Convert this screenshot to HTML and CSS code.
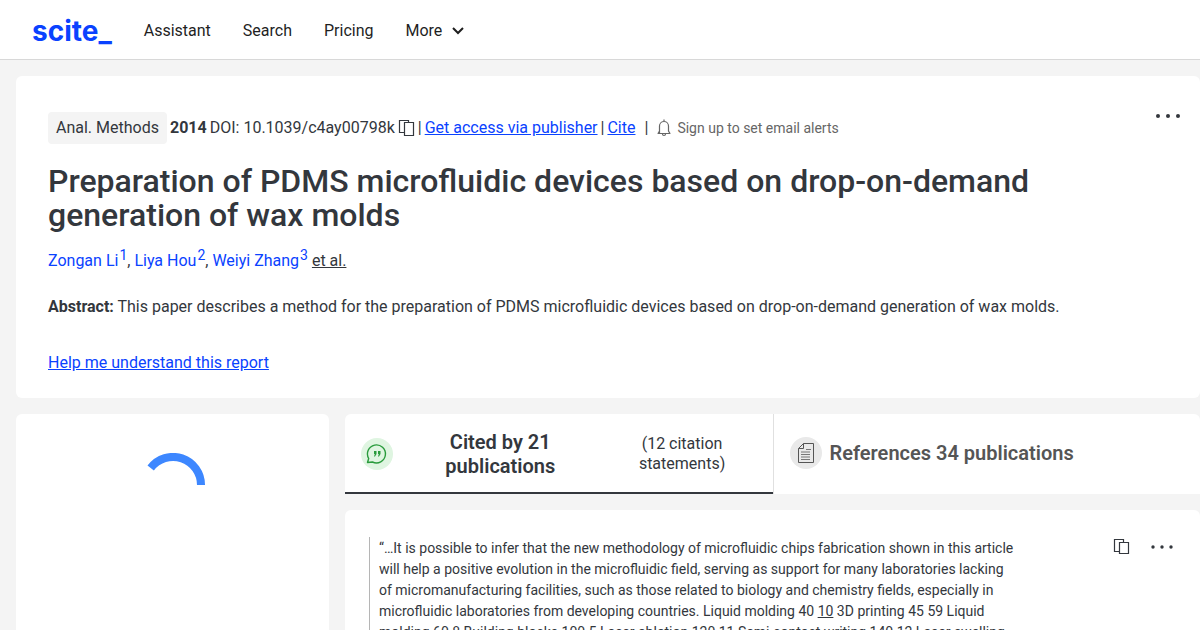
FILE: index.html
```html
<!DOCTYPE html>
<html lang="en">
<head>
    <meta charset="UTF-8">
    <meta name="viewport" content="width=device-width, initial-scale=1.0">
    <title>Preparation of PDMS microfluidic devices - scite</title>
    <link rel="stylesheet" href="styles.css">
</head>
<body>
    <header class="navbar">
        <a class="logo" href="#">scite_</a>
        <nav class="nav-links">
            <a href="#">Assistant</a>
            <a href="#">Search</a>
            <a href="#">Pricing</a>
            <button class="nav-more" type="button">
                More
                <svg width="12" height="8" viewBox="0 0 12 8" fill="none" stroke="currentColor" stroke-width="2"><path d="M1 1l5 5 5-5"/></svg>
            </button>
        </nav>
    </header>

    <main class="page">
        <section class="card report">
            <div class="meta">
                <span class="journal">Anal. Methods</span>
                <strong>2014</strong>
                <span>DOI: 10.1039/c4ay00798k</span>
                <button class="icon-button" type="button" aria-label="Copy DOI">
                    <svg width="17" height="18" viewBox="0 0 17 18" fill="none" stroke="currentColor" stroke-width="1.2"><path d="M6.500 13.500h-5v-12h9v2M6.500 3.500h9v13h-9z"/></svg>
                </button>
                <span>|</span>
                <a href="#">Get access via publisher</a>
                <span>|</span>
                <a href="#">Cite</a>
                <span class="divider">|</span>
                <button class="alerts" type="button">
                    <svg width="14" height="18" viewBox="0 0 14 18" fill="none" stroke="currentColor" stroke-width="1.2"><path d="M.5 14.500h13M2.500 14.500V7a4.500 4.500 0 0 1 9 0v5l1.500 2.500M2.500 12L1 14.500M7 2.500V.5M5.500 15a1.500 1.500 0 0 0 3 0"/></svg>
                    Sign up to set email alerts
                </button>
            </div>
            <h1>Preparation of PDMS microfluidic devices based on drop-on-demand generation of wax molds</h1>
            <p class="authors"><a href="#">Zongan Li<sup>1</sup></a>, <a href="#">Liya Hou<sup>2</sup></a>, <a href="#">Weiyi Zhang<sup>3</sup></a> <button class="et-al" type="button">et al.</button></p>
            <p class="abstract"><strong>Abstract:</strong> This paper describes a method for the preparation of PDMS microfluidic devices based on drop-on-demand generation of wax molds.</p>
            <a class="help" href="#">Help me understand this report</a>
            <button class="icon-button report-menu" type="button" aria-label="More options">
                <svg width="24" height="4" viewBox="0 0 24 4" fill="currentColor"><circle cx="2" cy="2" r="2"/><circle cx="12" cy="2" r="2"/><circle cx="22" cy="2" r="2"/></svg>
            </button>
        </section>

        <div class="columns">
            <aside class="card sidebar">
                <svg class="spinner" width="64" height="64" viewBox="0 0 64 64" fill="none" stroke="#3d87ff" stroke-width="8"><path d="M9.700 15A28 28 0 0 1 60 32"/></svg>
            </aside>

            <div class="results">
                <div class="tabs">
                    <button class="tab active" type="button">
                        <svg width="32" height="32" viewBox="0 0 32 32" fill="none">
                            <circle cx="16" cy="16" r="16" fill="#dff5e1"/>
                            <path d="M6.500 24.500l1.200-4a9 9 0 1 1 3.800 3.500z" stroke="#299b3c" stroke-width="1.400" stroke-linejoin="round"/>
                            <path d="M13 13h2.500v3l-1.500 2.500h-1l.8-2.500H13zM17 13h2.500v3L18 18.500h-1l.8-2.500H17z" fill="#299b3c"/>
                        </svg>
                        <span class="tab-title">Cited by 21 publications</span>
                        <span class="tab-note">(12 citation statements)</span>
                    </button>
                    <button class="tab references" type="button">
                        <svg width="32" height="32" viewBox="0 0 32 32" fill="none">
                            <circle cx="16" cy="16" r="16" fill="#e9e9e9"/>
                            <path d="M8.500 11.500l5-5h10v19h-15z" stroke="#555"/>
                            <path d="M8.500 11.500h5v-5" stroke="#555"/>
                            <path d="M16 12.500h5M11 15h9M11 17.500h9M11 20h9M11 22.500h9" stroke="#777"/>
                        </svg>
                        <span class="tab-title">References 34 publications</span>
                    </button>
                </div>

                <article class="card citation">
                    <blockquote>“…It is possible to infer that the new methodology of microfluidic chips fabrication shown in this article will help a positive evolution in the microfluidic field, serving as support for many laboratories lacking of micromanufacturing facilities, such as those related to biology and chemistry fields, especially in microfluidic laboratories from developing countries. Liquid molding 40 <u>10</u> 3D printing 45 59 Liquid molding 60 8 Building blocks 100 5 Laser ablation 120 11 Semi-contact writing 140 12 Laser swelling</blockquote>
                    <div class="citation-actions">
                        <button class="icon-button" type="button" aria-label="Copy citation">
                            <svg width="18" height="18" viewBox="0 0 18 18" fill="none" stroke="currentColor" stroke-width="1.200"><path d="M6.500 13.500h-5v-12h9v3M6.500 4.500h9v11h-9z"/></svg>
                        </button>
                        <button class="icon-button" type="button" aria-label="More options">
                            <svg width="22" height="4" viewBox="0 0 22 4" fill="currentColor"><circle cx="2" cy="2" r="1.700"/><circle cx="11" cy="2" r="1.700"/><circle cx="20" cy="2" r="1.700"/></svg>
                        </button>
                    </div>
                </article>
            </div>
        </div>
    </main>
</body>
</html>
```
FILE: styles.css
```css
* {
    margin: 0;
    padding: 0;
    box-sizing: border-box;
}

body {
    font-family: Roboto, "Liberation Sans", sans-serif;
    font-size: 16px;
    line-height: 24px;
    color: #33373d;
    background-color: #f4f4f4;
    height: 100vh;
    overflow: hidden;
}

button {
    font: inherit;
    color: inherit;
    background: none;
    border: none;
    cursor: pointer;
}

svg {
    display: block;
    flex-shrink: 0;
}

a {
    color: #0a42ff;
}

.navbar {
    display: flex;
    align-items: center;
    gap: 32px;
    height: 60px;
    padding: 2px 32px 0;
    background: #fff;
    border-bottom: 1px solid #d8d8d8;
}

.logo {
    font-family: Inter, sans-serif;
    font-size: 28px;
    font-weight: 700;
    text-decoration: none;
}

.nav-links {
    display: flex;
    align-items: center;
    gap: 32px;
}

.nav-links a,
.nav-more {
    color: #1f1f1f;
    text-decoration: none;
}

.nav-more {
    display: flex;
    align-items: center;
    gap: 10px;
}

.page {
    padding: 16px 0 0 16px;
}

.card {
    background: #fff;
    border-radius: 6px;
}

.report {
    position: relative;
    padding: 36px 32px 23px;
}

.meta {
    display: flex;
    align-items: center;
    gap: 3px;
    margin-bottom: 20px;
}

.journal {
    padding: 4px 8px;
    background: #f4f4f4;
    border-radius: 4px;
}

.icon-button {
    display: flex;
}

.divider {
    margin: 0 6px;
}

.alerts {
    display: flex;
    align-items: center;
    gap: 6px;
    font-size: 14px;
    color: #666;
}

h1 {
    max-width: 1020px;
    font-size: 32px;
    font-weight: 500;
    line-height: 34px;
    margin-bottom: 17px;
}

.authors a {
    text-decoration: none;
}

.authors sup {
    font-size: 14px;
    line-height: 0;
    margin-left: 1px;
}

.et-al {
    text-decoration: underline;
}

.abstract {
    margin: 22px 0 32px;
}

.report-menu {
    position: absolute;
    top: 38px;
    right: 20px;
}

.columns {
    display: flex;
    gap: 16px;
    margin-top: 16px;
}

.sidebar {
    flex: 0 0 313px;
    min-height: 240px;
    padding: 39px 0;
}

.spinner {
    margin: 0 auto;
}

.results {
    flex: 1;
}

.tabs {
    display: grid;
    grid-template-columns: 1fr 1fr;
    min-height: 80px;
    margin-bottom: 16px;
    background: #fff;
    border-radius: 6px 6px 0 0;
}

.tab {
    display: flex;
    align-items: center;
    gap: 8px;
    padding: 0 16px;
}

.tab.active {
    padding-top: 2px;
    border-bottom: 2px solid #33373d;
}

.tab.active .tab-title {
    flex: 4;
}

.tab-title {
    font-size: 20px;
    font-weight: 600;
}

.tab-note {
    flex: 3;
    line-height: 20px;
}

.references {
    padding-bottom: 2px;
    color: #555;
    border-left: 1px solid #e0e0e0;
}

.citation {
    display: flex;
    justify-content: space-between;
    padding: 27px 27px 24px 24px;
}

blockquote {
    max-width: 650px;
    padding: 1px 0 0 9px;
    border-left: 1px solid #b5b5b5;
    font-size: 14px;
    line-height: 21px;
}

.citation-actions {
    display: flex;
    gap: 20px;
    height: 20px;
    align-items: center;
}
```
